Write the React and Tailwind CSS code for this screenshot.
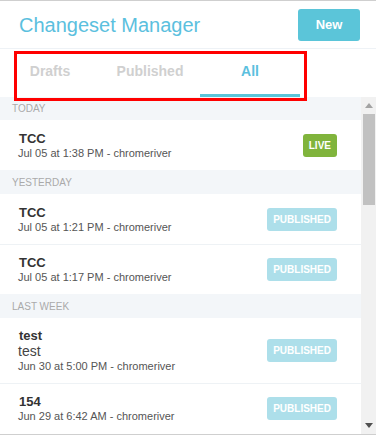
import React from 'react';

const groups = [
  {
    label: 'Today',
    items: [{ title: 'TCC', meta: 'Jul 05 at 1:38 PM - chromeriver', status: 'live' }],
  },
  {
    label: 'Yesterday',
    items: [
      { title: 'TCC', meta: 'Jul 05 at 1:21 PM - chromeriver', status: 'published' },
      { title: 'TCC', meta: 'Jul 05 at 1:17 PM - chromeriver', status: 'published' },
    ],
  },
  {
    label: 'Last Week',
    items: [
      { title: 'test', desc: 'test', meta: 'Jun 30 at 5:00 PM - chromeriver', status: 'published' },
      { title: '154', meta: 'Jun 29 at 6:42 AM - chromeriver', status: 'published' },
    ],
  },
];

function Badge({ status }) {
  if (status === 'live') {
    return (
      <span className="h-[23px] px-[6px] flex items-center rounded-[3px] bg-[#80b43c] text-white text-[10px] font-bold">
        LIVE
      </span>
    );
  }
  return (
    <span className="h-[23px] px-[6px] flex items-center rounded-[3px] bg-[#addfea] text-white text-[10px] font-bold">
      PUBLISHED
    </span>
  );
}

export default function App() {
  const tabs = ['Drafts', 'Published', 'All'];
  const active = 'All';

  return (
    <div className="relative w-[376px] h-[435px] flex flex-col bg-white border-t border-b border-[#cfcfcf] overflow-hidden font-['Liberation_Sans',Arial,sans-serif]">
      {/* Header */}
      <header className="h-[48px] shrink-0 flex items-center justify-between pl-[19px] pr-[16px] border-b border-[#eef2f6]">
        <h1 className="text-[20px] text-[#5bc0de] leading-none">Changeset Manager</h1>
        <button className="w-[62px] h-[32px] rounded-[3px] bg-[#5bc5d9] text-white text-[13px] font-bold">New</button>
      </header>

      {/* Tabs */}
      <nav className="h-[48px] shrink-0 flex">
        {tabs.map((t) => (
          <div
            key={t}
            className={`w-[100px] flex items-center justify-center text-[14px] font-bold border-b-[3px] ${
              t === active ? 'text-[#5bc0de] border-[#5bc5d9]' : 'text-[#d0d0d0] border-transparent'
            }`}
          >
            {t}
          </div>
        ))}
      </nav>

      {/* List + scrollbar */}
      <div className="flex-1 flex min-h-0">
        <div className="flex-1 overflow-hidden">
          {groups.map((g, gi) => (
            <div key={g.label}>
              <div className={`${gi === 0 ? 'h-[23px]' : 'h-[24px]'} flex items-center pl-[12px] bg-[#f3f6f9] text-[10px] uppercase text-[#aaaaaa]`}>
                {g.label}
              </div>
              {g.items.map((it, i) => (
                <div
                  key={i}
                  className={`flex items-center justify-between pl-[18px] pr-[24px] ${it.desc ? 'h-[65px]' : 'h-[50px]'} ${
                    i > 0 ? 'border-t border-[#eef2f5]' : ''
                  }`}
                >
                  <div className="flex flex-col">
                    <span className="text-[13px] font-bold text-[#333] leading-[15px] pl-px">{it.title}</span>
                    {it.desc && <span className="text-[14px] text-[#444] leading-[16px]">{it.desc}</span>}
                    <span className="text-[11px] text-[#555] leading-[14px]">{it.meta}</span>
                  </div>
                  <Badge status={it.status} />
                </div>
              ))}
            </div>
          ))}
        </div>

        {/* Scrollbar */}
        <div className="w-[15px] shrink-0 flex flex-col bg-[#f1f1f1]">
          <div className="h-[17px] flex items-center justify-center">
            <svg width="8" height="5" viewBox="0 0 8 5">
              <path d="M0 5 L4 0 L8 5 Z" fill="#a3a3a3" />
            </svg>
          </div>
          <div className="h-[91px] ml-[2px] mr-px bg-[#c1c1c1]" />
          <div className="flex-1" />
          <div className="h-[17px] flex items-center justify-center">
            <svg width="8" height="5" viewBox="0 0 8 5">
              <path d="M0 0 L8 0 L4 5 Z" fill="#505050" />
            </svg>
          </div>
        </div>
      </div>

      {/* Highlight box */}
      <div className="absolute left-[14px] top-[50px] w-[293px] h-[50px] border-[3px] border-[#ff0000] pointer-events-none" />
    </div>
  );
}
